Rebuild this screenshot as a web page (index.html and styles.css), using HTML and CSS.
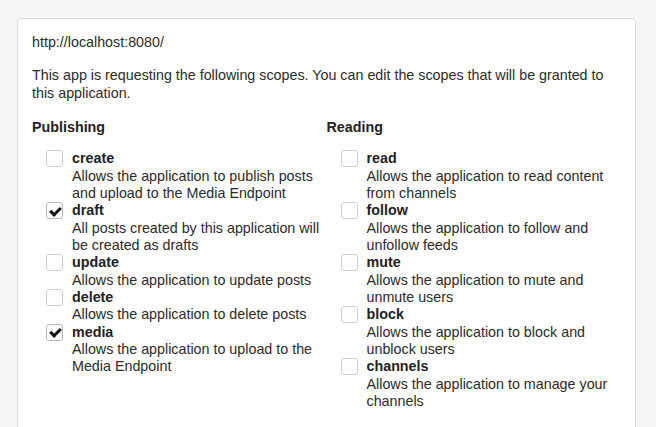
FILE: index.html
```html
<!DOCTYPE html>
<html>
<head>
<meta charset="utf-8">
<link rel="stylesheet" href="styles.css">
</head>
<body>
<div class="card">
  <p class="url">http://localhost:8080/</p>
  <p class="intro">This app is requesting the following scopes. You can edit the scopes that will be granted to this application.</p>
  <div class="scopes">
    <div class="group">
      <h3>Publishing</h3>
      <ul>
        <li><span class="box"></span><div><b>create</b><br>Allows the application to publish posts and upload to the Media Endpoint</div></li>
        <li><span class="box checked"></span><div><b>draft</b><br>All posts created by this application will be created as drafts</div></li>
        <li><span class="box"></span><div><b>update</b><br>Allows the application to update posts</div></li>
        <li><span class="box"></span><div><b>delete</b><br>Allows the application to delete posts</div></li>
        <li><span class="box checked"></span><div><b>media</b><br>Allows the application to upload to the Media Endpoint</div></li>
      </ul>
    </div>
    <div class="group">
      <h3>Reading</h3>
      <ul>
        <li><span class="box"></span><div><b>read</b><br>Allows the application to read content from channels</div></li>
        <li><span class="box"></span><div><b>follow</b><br>Allows the application to follow and unfollow feeds</div></li>
        <li><span class="box"></span><div><b>mute</b><br>Allows the application to mute and unmute users</div></li>
        <li><span class="box"></span><div><b>block</b><br>Allows the application to block and unblock users</div></li>
        <li><span class="box"></span><div><b>channels</b><br>Allows the application to manage your channels</div></li>
      </ul>
    </div>
  </div>
</div>
</body>
</html>
```
FILE: styles.css
```css
html, body {
  margin: 0;
  background: #f6f6f6;
}
body {
  padding: 18px 20px 0 17px;
  font-family: "Liberation Sans", Arial, sans-serif;
  font-size: 14.3px;
  line-height: 17.33px;
  color: #2b2b2b;
}
.card {
  width: 589px;
  background: #fff;
  border: 1px solid #dcdcdc;
  border-radius: 4px;
  padding: 15px 14px 40px 14px;
  box-shadow: 0 1px 1px rgba(0,0,0,0.03);
}
p {
  margin: 0;
}
.url {
  margin-bottom: 16px;
}
.intro {
  margin-bottom: 17px;
}
.scopes {
  display: grid;
  grid-template-columns: 1fr 1fr;
}
h3 {
  margin: 0 0 14px 0;
  font-size: 14.3px;
  line-height: 17.33px;
  font-weight: bold;
  color: #222;
}
ul {
  list-style: none;
  margin: 0;
  padding: 0 0 0 14px;
}
li {
  display: flex;
  gap: 9px;
}
b {
  color: #222;
}
.box {
  flex: none;
  box-sizing: border-box;
  width: 17px;
  height: 17px;
  margin-top: 0;
  border: 1px solid #cfcfcf;
  border-radius: 3px;
  background: #fff;
  position: relative;
}
.box.checked {
  border-color: #b8b8b8;
}
.box.checked::after {
  content: "";
  position: absolute;
  left: 5px;
  top: 1.5px;
  width: 4px;
  height: 8px;
  border: solid #111;
  border-width: 0 3px 3px 0;
  transform: rotate(45deg);
}
```
